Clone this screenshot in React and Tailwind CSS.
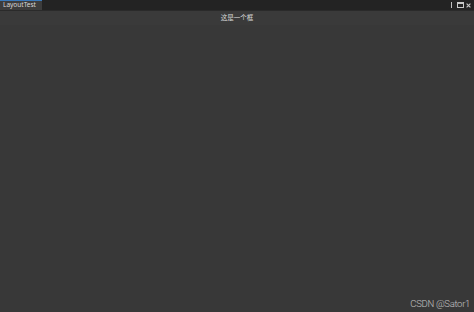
export default function App() {
  return (
    <div className="w-[474px] h-[312px] flex flex-col bg-[#383838] font-['Noto_Sans','Noto_Sans_CJK_SC',sans-serif] text-[#d2d2d2]">
      <div className="h-[10px] flex items-stretch bg-[#232323]">
        <div className="w-[42px] flex items-center bg-[#3c3c3c] border-t border-[#3a79bb] pl-[3px] text-[6.5px] leading-none text-[#d8d8d8]">
          LayoutTest
        </div>
        <div className="flex-1" />
        <div className="flex items-center pr-[3px] text-[#c8c8c8]">
          <span className="w-[1px] h-[6px] bg-[#c0c0c0]" />
          <svg width="7" height="6" viewBox="0 0 7 6" className="ml-[5px]">
            <rect x="0.5" y="0.5" width="6" height="5" fill="none" stroke="#c8c8c8" />
            <rect x="0.5" y="0.5" width="6" height="1.5" fill="#c8c8c8" />
          </svg>
          <svg width="5" height="5" viewBox="0 0 5 5" className="ml-[2px]">
            <path d="M0.6 0.6 L4.4 4.4 M4.4 0.6 L0.6 4.4" stroke="#c8c8c8" strokeWidth="1.1" />
          </svg>
        </div>
      </div>
      <div className="h-[1px] bg-[#2a2a2a]" />
      <div className="h-[14px] flex items-center justify-center bg-[#3a3a3a] text-[6.5px] leading-none text-[#dcdcdc]">
        这是一个框
      </div>
      <div className="flex-1 flex items-end justify-end pr-[4px] pb-[4px]">
        <span className="text-[9.5px] leading-none tracking-[-0.3px] font-light text-[#e0e0e0] opacity-80 font-['Roboto',sans-serif]">
          CSDN @Sator1
        </span>
      </div>
    </div>
  );
}
